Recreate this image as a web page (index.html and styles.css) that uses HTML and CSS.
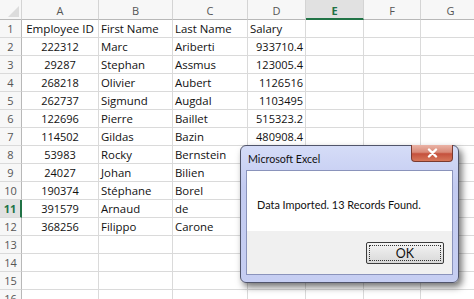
FILE: index.html
```html
<!DOCTYPE html>
<html lang="en">
<head>
  <meta charset="UTF-8">
  <title>Excel - Data Import</title>
  <link rel="stylesheet" href="styles.css">
</head>
<body>
  <div class="sheet">
    <div class="row head">
      <div class="cell corner"><span class="tri"></span></div>
      <div class="cell col">A</div>
      <div class="cell col">B</div>
      <div class="cell col">C</div>
      <div class="cell col">D</div>
      <div class="cell col sel">E</div>
      <div class="cell col">F</div>
      <div class="cell col">G</div>
    </div>
    <div class="row"><div class="cell num">1</div><div class="cell id hd">Employee ID</div><div class="cell txt">First Name</div><div class="cell txt">Last Name</div><div class="cell txt">Salary</div><div class="cell"></div><div class="cell"></div><div class="cell"></div></div>
    <div class="row"><div class="cell num">2</div><div class="cell id">222312</div><div class="cell txt">Marc</div><div class="cell txt">Ariberti</div><div class="cell amt">933710.4</div><div class="cell"></div><div class="cell"></div><div class="cell"></div></div>
    <div class="row"><div class="cell num">3</div><div class="cell id">29287</div><div class="cell txt">Stephan</div><div class="cell txt">Assmus</div><div class="cell amt">123005.4</div><div class="cell"></div><div class="cell"></div><div class="cell"></div></div>
    <div class="row"><div class="cell num">4</div><div class="cell id">268218</div><div class="cell txt">Olivier</div><div class="cell txt">Aubert</div><div class="cell amt">1126516</div><div class="cell"></div><div class="cell"></div><div class="cell"></div></div>
    <div class="row"><div class="cell num">5</div><div class="cell id">262737</div><div class="cell txt">Sigmund</div><div class="cell txt">Augdal</div><div class="cell amt">1103495</div><div class="cell"></div><div class="cell"></div><div class="cell"></div></div>
    <div class="row"><div class="cell num">6</div><div class="cell id">122696</div><div class="cell txt">Pierre</div><div class="cell txt">Baillet</div><div class="cell amt">515323.2</div><div class="cell"></div><div class="cell"></div><div class="cell"></div></div>
    <div class="row"><div class="cell num">7</div><div class="cell id">114502</div><div class="cell txt">Gildas</div><div class="cell txt">Bazin</div><div class="cell amt">480908.4</div><div class="cell"></div><div class="cell"></div><div class="cell"></div></div>
    <div class="row"><div class="cell num">8</div><div class="cell id">53983</div><div class="cell txt">Rocky</div><div class="cell txt">Bernstein</div><div class="cell amt"></div><div class="cell"></div><div class="cell"></div><div class="cell"></div></div>
    <div class="row"><div class="cell num">9</div><div class="cell id">24027</div><div class="cell txt">Johan</div><div class="cell txt">Bilien</div><div class="cell amt"></div><div class="cell"></div><div class="cell"></div><div class="cell"></div></div>
    <div class="row"><div class="cell num">10</div><div class="cell id">190374</div><div class="cell txt">Stéphane</div><div class="cell txt">Borel</div><div class="cell amt"></div><div class="cell"></div><div class="cell"></div><div class="cell"></div></div>
    <div class="row"><div class="cell num active">11</div><div class="cell id">391579</div><div class="cell txt">Arnaud</div><div class="cell txt">de</div><div class="cell amt"></div><div class="cell"></div><div class="cell"></div><div class="cell"></div></div>
    <div class="row"><div class="cell num">12</div><div class="cell id">368256</div><div class="cell txt">Filippo</div><div class="cell txt">Carone</div><div class="cell amt"></div><div class="cell"></div><div class="cell"></div><div class="cell"></div></div>
    <div class="row"><div class="cell num">13</div><div class="cell"></div><div class="cell"></div><div class="cell"></div><div class="cell"></div><div class="cell"></div><div class="cell"></div><div class="cell"></div></div>
    <div class="row"><div class="cell num">14</div><div class="cell"></div><div class="cell"></div><div class="cell"></div><div class="cell"></div><div class="cell"></div><div class="cell"></div><div class="cell"></div></div>
    <div class="row"><div class="cell num">15</div><div class="cell"></div><div class="cell"></div><div class="cell"></div><div class="cell"></div><div class="cell"></div><div class="cell"></div><div class="cell"></div></div>
    <div class="row"><div class="cell num">16</div><div class="cell"></div><div class="cell"></div><div class="cell"></div><div class="cell"></div><div class="cell"></div><div class="cell"></div><div class="cell"></div></div>
  </div>

  <div class="dialog">
    <div class="titlebar">
      <span class="title">Microsoft Excel</span>
      <span class="close">
        <svg width="11" height="10" viewBox="0 0 11 10"><path d="M2 1.5 L9 8.5 M9 1.5 L2 8.5" stroke="#fff" stroke-width="2.4" stroke-linecap="round"/></svg>
      </span>
    </div>
    <div class="body">
      <div class="message">Data Imported. 13 Records Found.</div>
      <div class="actions">
        <button class="ok"><span>OK</span></button>
      </div>
    </div>
  </div>
</body>
</html>
```

FILE: styles.css
```css
body {
  margin: 0;
  width: 474px;
  height: 299px;
  overflow: hidden;
  background: #fff;
  font-family: 'Open Sans', sans-serif;
  position: relative;
}

.sheet {
  font-size: 11.4px;
  color: #111;
}

.row {
  display: grid;
  grid-template-columns: 22px 77px 74px 75px 58px 58px 57px 60px;
  height: 18px;
}

.row.head {
  height: 20px;
}

.cell {
  box-sizing: border-box;
  border-right: 1px solid #dadada;
  border-bottom: 1px solid #dadada;
  display: flex;
  align-items: center;
  white-space: nowrap;
  line-height: 1;
}

.head .cell {
  background: #f7f7f7;
  border-bottom-color: #b8b8b8;
  border-right-color: #d4d4d4;
  justify-content: center;
  color: #555;
  font-size: 11px;
  padding-top: 2px;
}

.corner {
  position: relative;
}

.tri {
  position: absolute;
  right: 2px;
  bottom: 2px;
  width: 0;
  height: 0;
  border-left: 11px solid transparent;
  border-bottom: 11px solid #dcdcdc;
}

.head .sel {
  background: #e1e1e1;
  border-bottom: 2px solid #217346;
  color: #217346;
  font-weight: bold;
}

.num {
  background: #f7f7f7;
  border-right-color: #b8b8b8;
  justify-content: center;
  color: #555;
  font-size: 11px;
}

.num.active {
  background: #e1e1e1;
  color: #217346;
  font-weight: bold;
  border-right: 2px solid #217346;
}

.id {
  justify-content: center;
  font-size: 11px;
}

.id.hd {
  font-size: 11.6px;
}

.txt {
  padding-left: 2px;
}

.amt {
  justify-content: flex-end;
  padding-right: 2px;
  font-size: 11px;
}

/* message box */
.dialog {
  position: absolute;
  left: 240px;
  top: 145px;
  width: 219px;
  height: 138px;
  box-sizing: border-box;
  border: 1px solid #50546a;
  border-radius: 6px;
  background: linear-gradient(to bottom, #d5dcf7, #c3cbf1 30%, #c6cef2);
  box-shadow: 3px 4px 7px rgba(0,0,0,0.55);
  padding: 0 5px 7px 5px;
  display: flex;
  flex-direction: column;
  font-family: Lato, sans-serif;
}

.titlebar {
  height: 24px;
  display: flex;
  align-items: center;
  position: relative;
}

.title {
  font-size: 10.7px;
  color: #111;
  padding-left: 2px;
  padding-top: 1px;
}

.close {
  position: absolute;
  right: 0;
  top: -1px;
  width: 42px;
  height: 17px;
  box-sizing: border-box;
  border: 1px solid #7a3a30;
  border-top: none;
  border-radius: 0 0 4px 4px;
  background: linear-gradient(to bottom, #eab3a6, #d98a78 45%, #c5513d 55%, #d7775a);
  display: flex;
  align-items: center;
  justify-content: center;
}

.body {
  flex: 1;
  border: 1px solid #8a93bb;
  background: #f0f0f0;
  display: flex;
  flex-direction: column;
}

.message {
  background: #fff;
  height: 60px;
  box-sizing: border-box;
  padding: 27px 0 0 10px;
  font-size: 10.9px;
  color: #111;
}

.actions {
  flex: 1;
  display: flex;
  justify-content: flex-end;
  align-items: flex-start;
  padding: 11px 8px 0 0;
}

.ok {
  width: 78px;
  height: 22px;
  padding: 2px;
  border: 1px solid #3c3c3c;
  border-radius: 2px;
  background: linear-gradient(to bottom, #f4f4f4, #e6e6e6 50%, #d8d8d8);
  font-family: Lato, sans-serif;
  font-size: 12.5px;
  color: #111;
}

.ok span {
  display: flex;
  align-items: center;
  justify-content: center;
  height: 100%;
  border: 1px dotted #333;
  box-sizing: border-box;
}
```
